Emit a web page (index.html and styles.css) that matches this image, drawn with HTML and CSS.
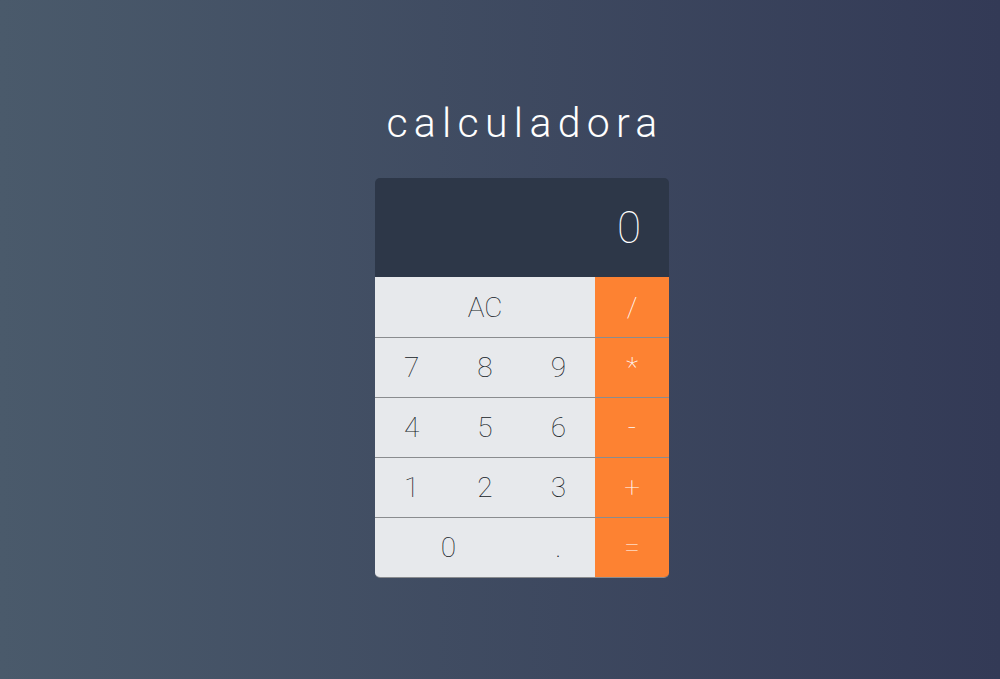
FILE: index.html
```html
<!DOCTYPE html>
<html lang="es">
<head>
  <meta charset="UTF-8" />
  <meta name="viewport" content="width=device-width, initial-scale=1.0" />
  <title>Calculadora</title>
  <link rel="stylesheet" href="styles.css">
</head>
<body>
  <main class="page">
    <h1 class="title">calculadora</h1>

    <div class="calculator">
      <div class="display" id="display">0</div>

      <div class="keys">
        <button class="key span-3" data-action="clear">AC</button>
        <button class="key operator" data-op="/">/</button>

        <button class="key">7</button>
        <button class="key">8</button>
        <button class="key">9</button>
        <button class="key operator" data-op="*">*</button>

        <button class="key">4</button>
        <button class="key">5</button>
        <button class="key">6</button>
        <button class="key operator" data-op="-">-</button>

        <button class="key">1</button>
        <button class="key">2</button>
        <button class="key">3</button>
        <button class="key operator" data-op="+">+</button>

        <button class="key span-2">0</button>
        <button class="key">.</button>
        <button class="key operator" data-action="equals">=</button>
      </div>
    </div>
  </main>
</body>
</html>
```

FILE: styles.css
```css
:root {
  --bg-left: #4a5a6b;
  --bg-right: #333a56;
  --screen: #2d3748;
  --key: #e7e9ec;
  --key-text: #141a26;
  --accent: #fd8232;
  --line: #8a8c8f;
}

* {
  box-sizing: border-box;
}

body {
  margin: 0;
  min-height: 100vh;
  background: linear-gradient(to right, var(--bg-left), var(--bg-right));
  font-family: Roboto, "Noto Sans", sans-serif;
  font-weight: 300;
}

.page {
  display: flex;
  flex-direction: column;
  align-items: center;
  padding: 100px 0 0 50px;
}

.title {
  margin: 0 0 32px;
  color: #ffffff;
  font-size: 41px;
  font-weight: 300;
  line-height: 46px;
  letter-spacing: 6.3px;
}

.calculator {
  width: 294px;
  margin-left: -6px;
  border-radius: 5px;
  overflow: hidden;
  border-bottom: 1px solid var(--line);
}

.display {
  height: 99px;
  padding: 0 28px;
  display: flex;
  align-items: center;
  justify-content: flex-end;
  background-color: var(--screen);
  color: #ffffff;
  font-size: 44px;
  font-weight: 100;
}

.keys {
  display: grid;
  grid-template-columns: 1fr 1fr 1fr 74px;
}

.key {
  height: 60px;
  border: none;
  border-top: 1px solid var(--line);
  background-color: var(--key);
  color: var(--key-text);
  font-family: inherit;
  font-size: 28px;
  font-weight: 100;
  padding: 0;
  cursor: pointer;
}

.key:first-child,
.key:nth-child(2) {
  border-top: none;
}

.key.operator {
  background-color: var(--accent);
  color: #ffffff;
}

.span-3 {
  grid-column: span 3;
}

.span-2 {
  grid-column: span 2;
}
```
